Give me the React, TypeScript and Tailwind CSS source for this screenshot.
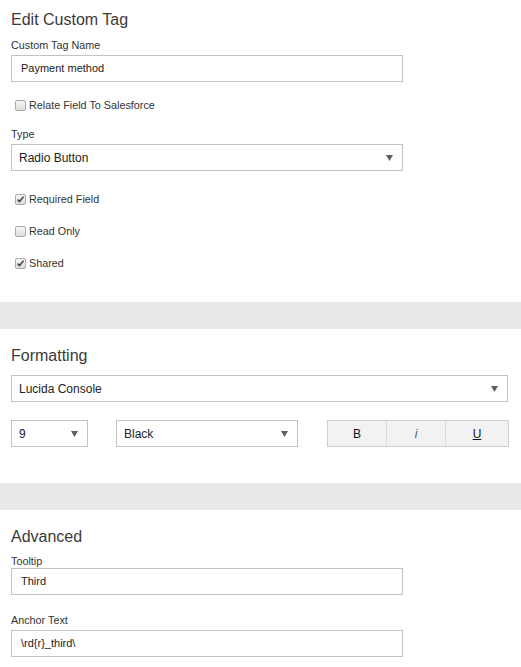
import React from "react";

const font = { fontFamily: '"Liberation Sans", Arial, sans-serif' };

function Check({ checked, label }: { checked?: boolean; label: string }) {
  return (
    <div className="flex items-center h-[14px] pl-[4px]">
      <span className="relative w-[11px] h-[11px] rounded-[2px] border border-[#aaaaaa] bg-gradient-to-b from-[#f6f6f6] to-[#dedede] shrink-0">
        {checked && (
          <svg viewBox="0 0 11 11" className="absolute -left-px -top-px w-[11px] h-[11px]">
            <path d="M2.6 5.6 L4.5 7.6 L8.6 2.8" fill="none" stroke="#4a4a4a" strokeWidth="1.6" />
          </svg>
        )}
      </span>
      <span className="ml-[3px] text-[10.8px] leading-[14px] text-[#333]">{label}</span>
    </div>
  );
}

function Arrow() {
  return (
    <svg viewBox="0 0 7 6" className="w-[7px] h-[6px]">
      <path d="M0 0 H7 L3.5 6 Z" fill="#5f5f5f" />
    </svg>
  );
}

function Select({ value, w }: { value: string; w: string }) {
  return (
    <div className={`${w} h-[27px] border border-[#c3c3c3] bg-white flex items-center justify-between pl-[7px] pr-[9px]`}>
      <span className="text-[12px] text-[#222]">{value}</span>
      <Arrow />
    </div>
  );
}

function Input({ value }: { value: string }) {
  return (
    <div className="w-[392px] h-[27px] border border-[#c3c3c3] bg-white flex items-center pl-[9px]">
      <span className="text-[11px] text-[#222]">{value}</span>
    </div>
  );
}

function Label({ children }: { children: React.ReactNode }) {
  return <div className="text-[10.8px] leading-[14px] text-[#333]">{children}</div>;
}

function Title({ children }: { children: React.ReactNode }) {
  return <div className="text-[16px] leading-[20px] text-[#3a3a3a]">{children}</div>;
}

export default function App() {
  return (
    <div className="w-[521px] h-[667px] bg-white overflow-hidden" style={font}>
      <div className="px-[11px] pt-[10px]">
        <Title>Edit Custom Tag</Title>
        <div className="mt-[8px]">
          <Label>Custom Tag Name</Label>
        </div>
        <div className="mt-[3px]">
          <Input value="Payment method" />
        </div>
        <div className="mt-[16px]">
          <Check label="Relate Field To Salesforce" />
        </div>
        <div className="mt-[15px]">
          <Label>Type</Label>
        </div>
        <div className="mt-[3px]">
          <Select value="Radio Button" w="w-[392px]" />
        </div>
        <div className="mt-[21px]">
          <Check checked label="Required Field" />
        </div>
        <div className="mt-[18px]">
          <Check label="Read Only" />
        </div>
        <div className="mt-[18px]">
          <Check checked label="Shared" />
        </div>
      </div>
      <div className="mt-[32px] h-[27px] bg-[#e9e9e9]" />
      <div className="px-[11px] pt-[17px]">
        <Title>Formatting</Title>
        <div className="mt-[9px]">
          <Select value="Lucida Console" w="w-[497px]" />
        </div>
        <div className="mt-[18px] flex items-center">
          <Select value="9" w="w-[77px]" />
          <div className="ml-[28px]">
            <Select value="Black" w="w-[182px]" />
          </div>
          <div className="ml-[29px] w-[182px] h-[27px] border border-[#d0d0d0] bg-[#f2f2f2] flex">
            <div className="w-[59px] flex items-center justify-center text-[12px] text-[#111] border-r border-[#dcdcdc]">B</div>
            <div className="w-[59px] flex items-center justify-center text-[12px] italic text-[#555] border-r border-[#dcdcdc]">i</div>
            <div className="flex-1 flex items-center justify-center text-[12px] text-[#111] underline">U</div>
          </div>
        </div>
      </div>
      <div className="mt-[36px] h-[27px] bg-[#e9e9e9]" />
      <div className="px-[11px] pt-[17px]">
        <Title>Advanced</Title>
        <div className="mt-[7px]">
          <Label>Tooltip</Label>
        </div>
        <div className="mt-[0px]">
          <Input value="Third" />
        </div>
        <div className="mt-[18px]">
          <Label>Anchor Text</Label>
        </div>
        <div className="mt-[3px]">
          <Input value="\rd{r}_third\" />
        </div>
      </div>
    </div>
  );
}
